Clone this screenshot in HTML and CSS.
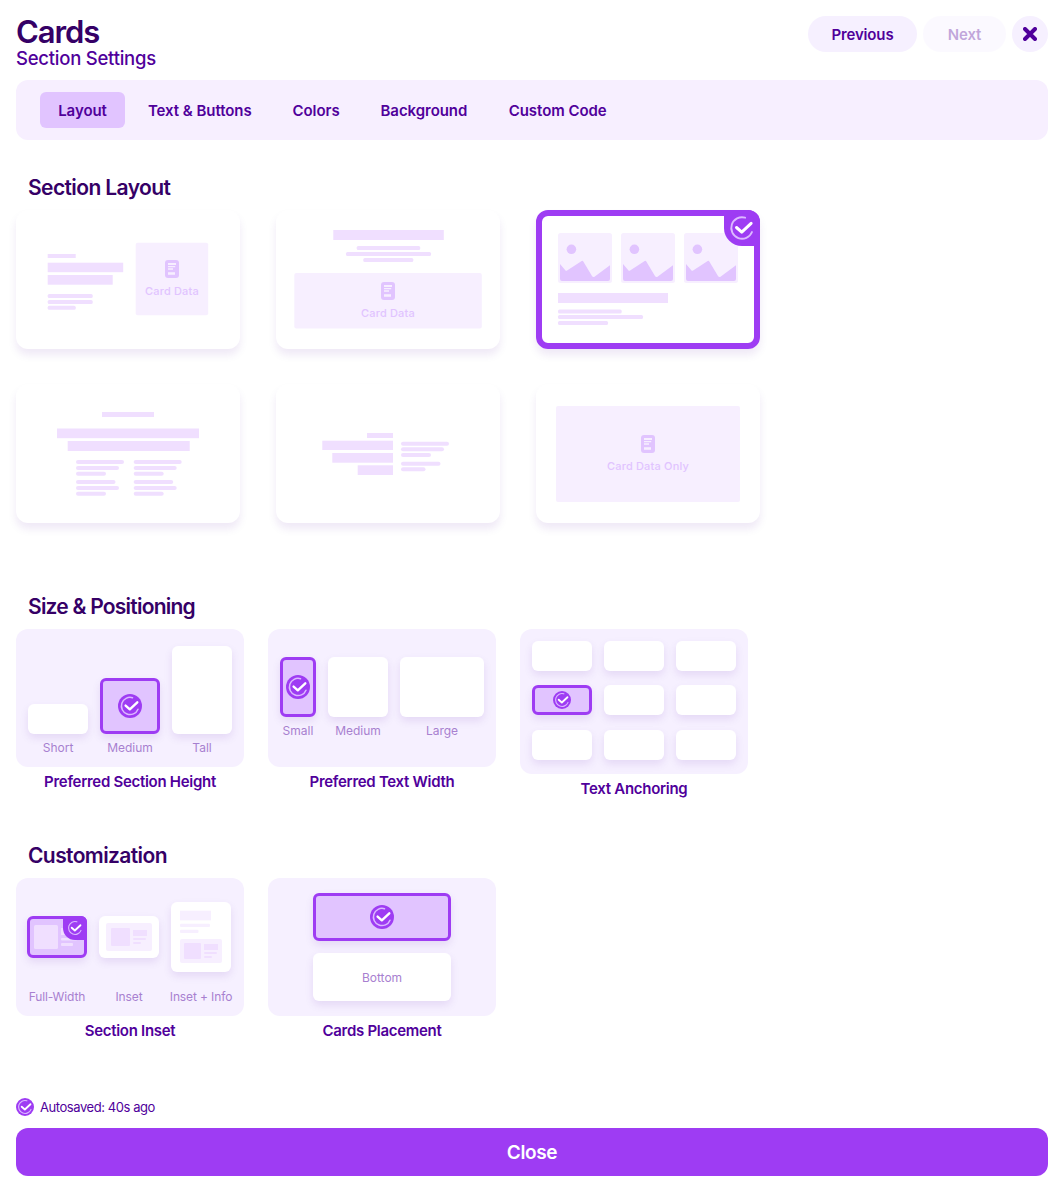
FILE: index.html
```html
<!DOCTYPE html>
<html lang="en">
<head>
<meta charset="utf-8">
<title>Cards – Section Settings</title>
<link rel="stylesheet" href="styles.css">
</head>
<body>
<svg class="defs" width="0" height="0" aria-hidden="true">
  <symbol id="check" viewBox="0 0 24 24">
    <circle cx="12" cy="12" r="12" fill="#9e3cf3"/>
    <path d="M14.5 3.750A8.600 8.600 0 1 0 20 15.200" fill="none" stroke="#dcb9ff" stroke-width="1.500" stroke-linecap="round"/>
    <path d="M7.600 11.600l4.200 3.700 7.500-7" fill="none" stroke="#fff" stroke-width="2.400" stroke-linecap="round" stroke-linejoin="round"/>
  </symbol>
  <symbol id="doc" viewBox="0 0 14 18">
    <rect width="14" height="18" rx="3" fill="#e1c4ff"/>
    <path d="M3 3h8v2H3zM3 6h7.200v1.300H3zM3 8.200h5v1.600H3zM3 12.300h7v2.400H3z" fill="#f7efff"/>
  </symbol>
  <symbol id="photo" viewBox="0 0 54 50">
    <rect width="54" height="50" rx="2.500" fill="#f7efff"/>
    <circle cx="13.400" cy="16.300" r="4.800" fill="#e1c4ff"/>
    <path d="M2 31l5.500 6.500q.5.600 1.200.2L23.700 28q1-.6 1.600.4L34 43q1.200 1.600 2.800.4L52 32.300V46q0 2-2 2H4q-2 0-2-2z" fill="#e1c4ff"/>
  </symbol>
</svg>

<header class="header">
  <div>
    <h1 class="title">Cards</h1>
    <p class="subtitle">Section Settings</p>
  </div>
  <div class="actions">
    <button class="pill prev">Previous</button>
    <button class="pill next" disabled>Next</button>
    <button class="pill close-icon" aria-label="Close">
      <svg width="14" height="14" viewBox="0 0 14 14"><path d="M2 2l10 10M12 2L2 12" stroke="#50009b" stroke-width="4" stroke-linecap="round"/></svg>
    </button>
  </div>
</header>

<nav class="tabs">
  <button class="tab active">Layout</button>
  <button class="tab wide">Text &amp; Buttons</button>
  <button class="tab colors">Colors</button>
  <button class="tab background">Background</button>
  <button class="tab code">Custom Code</button>
</nav>

<section class="layouts">
  <h2 class="heading">Section Layout</h2>
  <div class="cards">
    <div class="card">
      <svg width="224" height="139" fill="#f0dfff">
        <rect x="31.700" y="44" width="28" height="4"/>
        <rect x="31.700" y="52.700" width="75.500" height="9.500"/>
        <rect x="31.700" y="65" width="65" height="9.700"/>
        <rect x="31.700" y="84" width="45" height="4" rx="1.500"/>
        <rect x="31.700" y="90" width="45" height="4" rx="1.500"/>
        <rect x="31.700" y="95.800" width="28" height="4" rx="1.500"/>
        <rect x="119.700" y="32.700" width="72.500" height="72.500" rx="2" fill="#f7efff"/>
        <use href="#doc" x="149" y="50" width="14" height="18"/>
        <text class="data-label" x="156" y="85">Card Data</text>
      </svg>
    </div>
    <div class="card">
      <svg width="224" height="139" fill="#f0dfff">
        <rect x="57.300" y="20" width="110.500" height="10"/>
        <rect x="80.700" y="36" width="63.500" height="4" rx="1.500"/>
        <rect x="70" y="42" width="85" height="4" rx="1.500"/>
        <rect x="87.300" y="48" width="50" height="4" rx="1.500"/>
        <rect x="18.300" y="63" width="187.500" height="55.500" rx="2" fill="#f7efff"/>
        <use href="#doc" x="105" y="72" width="14" height="18"/>
        <text class="data-label" x="112" y="107">Card Data</text>
      </svg>
    </div>
    <div class="card selected">
      <svg width="224" height="139" fill="#f0dfff">
        <use href="#photo" x="22" y="23" width="54" height="50"/>
        <use href="#photo" x="85" y="23" width="54" height="50"/>
        <use href="#photo" x="148" y="23" width="54" height="50"/>
        <rect x="22" y="83" width="110" height="10"/>
        <rect x="22" y="99.500" width="63.700" height="4" rx="1.500"/>
        <rect x="22" y="105" width="85" height="4" rx="1.500"/>
        <rect x="22" y="111" width="50" height="4" rx="1.500"/>
      </svg>
      <span class="badge"><svg width="30" height="30"><use href="#check"/></svg></span>
    </div>
    <div class="card">
      <svg width="224" height="139" fill="#f0dfff">
        <rect x="86" y="28" width="52" height="5"/>
        <rect x="41" y="44.500" width="142" height="9.700"/>
        <rect x="51.700" y="57" width="122" height="10"/>
        <g id="pair">
          <rect x="60" y="76" width="48" height="4" rx="2"/>
          <rect x="60" y="82" width="43" height="4" rx="2"/>
          <rect x="60" y="87.700" width="30" height="4" rx="2"/>
          <rect x="60" y="96" width="39.500" height="4" rx="2"/>
          <rect x="60" y="102" width="43" height="4" rx="2"/>
          <rect x="60" y="107.700" width="30" height="4" rx="2"/>
        </g>
        <use href="#pair" x="57.700"/>
      </svg>
    </div>
    <div class="card">
      <svg width="224" height="139" fill="#f0dfff">
        <rect x="91" y="49" width="26" height="5"/>
        <rect x="46.300" y="56.700" width="70.700" height="9.300"/>
        <rect x="56.300" y="69" width="60.700" height="9.700"/>
        <rect x="81.700" y="81.300" width="35.300" height="9.700"/>
        <rect x="125" y="57.700" width="48" height="4" rx="2"/>
        <rect x="125" y="63.300" width="43" height="4" rx="2"/>
        <rect x="125" y="69" width="30" height="4" rx="2"/>
        <rect x="125" y="77.700" width="39.500" height="4" rx="2"/>
        <rect x="125" y="83.300" width="24.500" height="4" rx="2"/>
      </svg>
    </div>
    <div class="card">
      <svg width="224" height="139">
        <rect x="20" y="22" width="184" height="96" rx="2" fill="#f7efff"/>
        <use href="#doc" x="105" y="51" width="14" height="18"/>
        <text class="data-label" x="112" y="86">Card Data Only</text>
      </svg>
    </div>
  </div>
</section>

<section class="sizing">
  <h2 class="heading tight">Size &amp; Positioning</h2>
  <div class="panels">
    <div class="setting">
      <div class="panel options heights">
        <div class="option"><span class="box short"></span><span class="label">Short</span></div>
        <div class="option"><span class="box mid on"><svg width="24" height="24"><use href="#check"/></svg></span><span class="label">Medium</span></div>
        <div class="option"><span class="box tall"></span><span class="label">Tall</span></div>
      </div>
      <p class="caption">Preferred Section Height</p>
    </div>
    <div class="setting">
      <div class="panel options widths">
        <div class="option"><span class="box narrow on"><svg width="24" height="24"><use href="#check"/></svg></span><span class="label">Small</span></div>
        <div class="option"><span class="box square"></span><span class="label">Medium</span></div>
        <div class="option"><span class="box large"></span><span class="label">Large</span></div>
      </div>
      <p class="caption">Preferred Text Width</p>
    </div>
    <div class="setting">
      <div class="panel anchors">
        <span class="box"></span><span class="box"></span><span class="box"></span>
        <span class="box on"><svg width="18" height="18"><use href="#check"/></svg></span><span class="box"></span><span class="box"></span>
        <span class="box"></span><span class="box"></span><span class="box"></span>
      </div>
      <p class="caption">Text Anchoring</p>
    </div>
  </div>
</section>

<section class="custom">
  <h2 class="heading">Customization</h2>
  <div class="panels">
    <div class="setting">
      <div class="panel options insets">
        <div class="option">
          <div class="stage"><span class="box on">
            <svg width="54" height="36" fill="#f0dfff">
              <rect x="4" y="6" width="24" height="24" rx="1.500"/>
              <rect x="31" y="9" width="18" height="7"/>
              <rect x="31" y="19" width="16" height="2.500" rx="1"/>
              <rect x="31" y="24" width="12" height="3" rx="1"/>
            </svg>
            <span class="badge small"><svg width="18" height="18"><use href="#check"/></svg></span>
          </span></div>
          <span class="label">Full-Width</span>
        </div>
        <div class="option">
          <div class="stage"><span class="box">
            <svg width="60" height="42" fill="#f0dfff">
              <rect x="7" y="7" width="46" height="28" rx="2" fill="#f7efff"/>
              <rect x="12" y="12" width="19" height="18" rx="1"/>
              <rect x="34" y="14" width="14" height="6"/>
              <rect x="34" y="22" width="13" height="2" rx="1"/>
              <rect x="34" y="26" width="8" height="2" rx="1"/>
            </svg>
          </span></div>
          <span class="label">Inset</span>
        </div>
        <div class="option">
          <div class="stage"><span class="box info">
            <svg width="60" height="70" fill="#f7efff">
              <rect x="9" y="8.700" width="31" height="9.700"/>
              <rect x="9" y="21.700" width="30" height="3.300" rx="1"/>
              <rect x="9" y="27.700" width="18.500" height="3.300" rx="1"/>
              <rect x="9" y="37" width="42" height="24" rx="2"/>
              <g fill="#f0dfff">
                <rect x="13" y="41" width="17" height="16" rx="1"/>
                <rect x="33" y="42" width="14" height="6"/>
                <rect x="33" y="50" width="13" height="2" rx="1"/>
                <rect x="33" y="54" width="8" height="2" rx="1"/>
              </g>
            </svg>
          </span></div>
          <span class="label">Inset + Info</span>
        </div>
      </div>
      <p class="caption">Section Inset</p>
    </div>
    <div class="setting">
      <div class="panel placement">
        <span class="box on"><svg width="24" height="24"><use href="#check"/></svg></span>
        <span class="box"><span class="label">Bottom</span></span>
      </div>
      <p class="caption">Cards Placement</p>
    </div>
  </div>
</section>

<footer class="footer">
  <p class="autosave"><svg width="18" height="18"><use href="#check"/></svg><span>Autosaved: 40s ago</span></p>
  <button class="close-button">Close</button>
</footer>
</body>
</html>
```
FILE: styles.css
```css
* { box-sizing: border-box; margin: 0; padding: 0; }
body {
  padding: 16px 15px 11px 16px;
  font-family: Inter, "Liberation Sans", sans-serif;
  font-weight: 500;
  color: #50009b;
  background: #fff;
}
button { border: 0; font: inherit; color: inherit; }
svg { display: block; flex: none; }
.defs { position: absolute; }

.header { display: flex; justify-content: space-between; height: 64px; }
.title { font-size: 31px; line-height: 32px; font-weight: 600; letter-spacing: -1.100px; color: #350066; }
.subtitle { font-size: 18.500px; line-height: 20px; letter-spacing: -0.240px; }
.actions { display: flex; gap: 6px; }
.pill {
  height: 36px;
  border-radius: 18px;
  background: #f6f0ff;
  font-size: 15px;
  font-weight: 600;
  letter-spacing: -0.150px;
  display: flex;
  align-items: center;
  justify-content: center;
}
.prev { width: 109px; }
.next { width: 83px; opacity: .35; }
.close-icon { width: 36px; }

.tabs {
  display: flex;
  align-items: center;
  gap: 5.300px;
  height: 60px;
  padding: 0 24px;
  border-radius: 12px;
  background: #f7efff;
}
.tab { width: 85px; height: 36px; padding-top: 1px; border-radius: 6px; background: none; font-size: 15px; font-weight: 600; letter-spacing: -0.050px; white-space: nowrap; }
.tab.active { background: #e1c4ff; }
.tab.wide { width: 139px; }
.tab.colors { width: 83px; }
.tab.background { width: 122px; }
.tab.code { width: 135px; }

.heading { padding-left: 12px; font-size: 21px; line-height: 26px; font-weight: 600; letter-spacing: -0.600px; color: #350066; }
.heading.tight { letter-spacing: -0.770px; }
.layouts { margin-top: 35px; }
.cards { display: grid; grid-template-columns: repeat(3, 224px); gap: 35px 36px; margin-top: 9px; }
.card { position: relative; height: 139px; border-radius: 12px; background: #fff; box-shadow: 0 6px 9px rgba(80, 0, 155, .09); }
.card.selected::after { content: ""; position: absolute; inset: 0; border: 6px solid #9e3cf3; border-radius: 12px; }
.data-label { font-size: 11px; font-weight: 500; letter-spacing: .180px; text-anchor: middle; fill: #e1c4ff; }
.badge {
  position: absolute;
  top: 0;
  right: 0;
  display: flex;
  align-items: center;
  justify-content: center;
  width: 36px;
  height: 36px;
  border-radius: 0 12px 0 18px;
  background: #9e3cf3;
}
.card .badge { z-index: 1; }
.badge.small { top: -3px; right: -3px; width: 24px; height: 24px; border-radius: 0 6px 0 12px; }

.sizing { margin-top: 71px; }
.custom { margin-top: 43px; }
.panels { display: flex; gap: 24px; margin-top: 9px; }
.setting { width: 228px; }
.panel { height: 138px; border-radius: 12px; background: #f6f0ff; }
.caption { margin-top: 4px; font-size: 15px; line-height: 22px; font-weight: 600; letter-spacing: -0.290px; text-align: center; white-space: nowrap; }
.options { display: flex; gap: 12px; padding: 0 12px; }
.option { display: flex; flex-direction: column; align-items: center; }
.label { font-size: 12px; font-weight: 400; line-height: 16px; letter-spacing: 0; color: #a880d0; white-space: nowrap; }
.box {
  position: relative;
  display: flex;
  align-items: center;
  justify-content: center;
  width: 60px;
  height: 30px;
  border-radius: 6px;
  background: #fff;
  box-shadow: 0 4px 9px rgba(80, 0, 155, .1);
}
.box.on { border: 3px solid #9e3cf3; background: #e1c4ff; }
.heights { align-items: flex-end; padding-bottom: 11px; }
.heights .label, .widths .label { margin-top: 6px; }
.mid { height: 56px; }
.tall { height: 88px; }
.widths { padding-top: 28px; }
.widths .box { height: 60px; }
.narrow { width: 36px; }
.large { width: 84px; }
.anchors { display: grid; grid-template-columns: repeat(3, 60px); grid-template-rows: 29.400px 30px 30px; gap: 14.600px 12px; height: 145px; padding: 12px; }
.insets { padding: 24px 11px 0; }
.insets .option { width: 60px; }
.insets .box { height: 42px; }
.insets .info { height: 70px; }
.stage { display: flex; align-items: center; height: 70px; }
.insets .label { margin-top: 17px; letter-spacing: -0.120px; }
.placement { display: flex; flex-direction: column; align-items: center; gap: 12px; padding-top: 15px; }
.placement .box { width: 138px; height: 48px; }
.placement .label { padding-top: 2px; }

.footer { margin-top: 56px; }
.autosave { display: flex; align-items: center; gap: 6px; height: 18px; font-size: 13px; font-weight: 400; letter-spacing: -0.430px; }
.close-button { display: block; width: 100%; height: 48px; margin-top: 12px; border-radius: 12px; background: #9e3cf3; color: #fff; font-size: 19px; font-weight: 600; letter-spacing: -0.350px; }
```
